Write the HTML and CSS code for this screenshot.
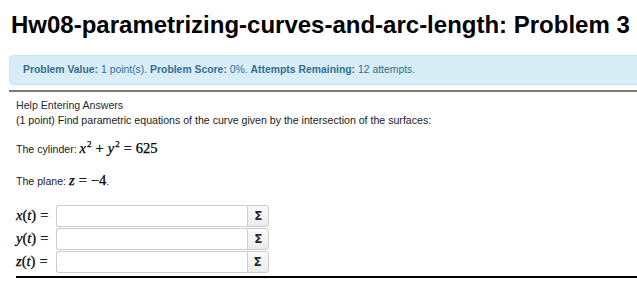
FILE: index.html
```html
<!DOCTYPE html>
<html lang="en">
<head>
    <meta charset="UTF-8">
    <title>Hw08-parametrizing-curves-and-arc-length: Problem 3</title>
    <link rel="stylesheet" href="styles.css">
</head>
<body>
    <h1 class="title">Hw08-parametrizing-curves-and-arc-length: Problem 3</h1>

    <div class="status">
        <strong>Problem Value:</strong> 1 point(s). <strong>Problem Score:</strong> 0%. <strong>Attempts Remaining:</strong> 12 attempts.
    </div>

    <div class="problem">
        <div class="help">Help Entering Answers</div>
        <p class="intro">(1 point) Find parametric equations of the curve given by the intersection of the surfaces:</p>

        <p class="line first">The cylinder: <span class="math"><i>x</i><sup>2</sup><span class="op">+</span><i>y</i><sup>2</sup><span class="op">=</span>625</span></p>
        <p class="line">The plane: <span class="math"><i>z</i><span class="op">=</span>&minus;4</span>.</p>

        <div class="answers">
            <div class="answer">
                <span class="math label"><i>x</i>(<i>t</i>)<span class="op">=</span></span>
                <input type="text" class="entry">
                <button type="button" class="sigma">&Sigma;</button>
            </div>
            <div class="answer">
                <span class="math label"><i>y</i>(<i>t</i>)<span class="op">=</span></span>
                <input type="text" class="entry">
                <button type="button" class="sigma">&Sigma;</button>
            </div>
            <div class="answer">
                <span class="math label"><i>z</i>(<i>t</i>)<span class="op">=</span></span>
                <input type="text" class="entry">
                <button type="button" class="sigma">&Sigma;</button>
            </div>
        </div>
    </div>
</body>
</html>
```

FILE: styles.css
```css
body {
    margin: 0;
    font-family: "Liberation Sans", Arial, sans-serif;
    color: #1a1a1a;
    overflow: hidden;
}

.title {
    margin: 0;
    padding: 10px 0 0 11px;
    font-size: 24px;
    line-height: 30px;
    font-weight: bold;
    color: #000;
    white-space: nowrap;
}

.status {
    margin: 15px -10px 0 9px;
    padding: 0 13px;
    height: 28px;
    line-height: 28px;
    font-size: 10.4px;
    color: #31708f;
    background-color: #d9edf7;
    border: 1px solid #bce8f1;
    border-radius: 4px;
}

.status strong {
    font-weight: bold;
}

.problem {
    margin: 5px 0 0 9px;
    padding: 6px 0 0 7px;
    border-top: 2px solid #7a7a7a;
    font-size: 10.6px;
}

.help {
    line-height: 15px;
    color: #1f2a36;
}

.intro {
    margin: 0;
    line-height: 15px;
}

.line {
    margin: 15px 0 0;
    line-height: 16px;
}

.line.first {
    margin-top: 12px;
}

.math {
    font-family: "Liberation Serif", "Times New Roman", serif;
    font-size: 14.5px;
    color: #000;
    -webkit-text-stroke: 0.25px #000;
}

.math sup {
    font-size: 9px;
    line-height: 0;
    margin-left: 1px;
}

.op {
    margin: 0 4px;
}

.answers {
    margin-top: 15px;
    padding-bottom: 3px;
    border-bottom: 2px solid #000;
}

.answer {
    display: flex;
    align-items: center;
    height: 23px;
}

.label {
    white-space: nowrap;
    margin-right: 4px;
}

.entry {
    width: 191px;
    height: 22px;
    box-sizing: border-box;
    margin: 0;
    border: 1px solid #ccc;
    border-right: none;
    border-radius: 3px 0 0 3px;
    font-size: 12px;
}

.sigma {
    width: 22px;
    height: 22px;
    padding: 0;
    margin: 0;
    border: 1px solid #ccc;
    border-radius: 0 3px 3px 0;
    background: linear-gradient(#fafafa, #ececec);
    font-family: "DejaVu Sans", sans-serif;
    font-size: 12px;
    font-weight: bold;
    color: #1c2a3a;
}
```
